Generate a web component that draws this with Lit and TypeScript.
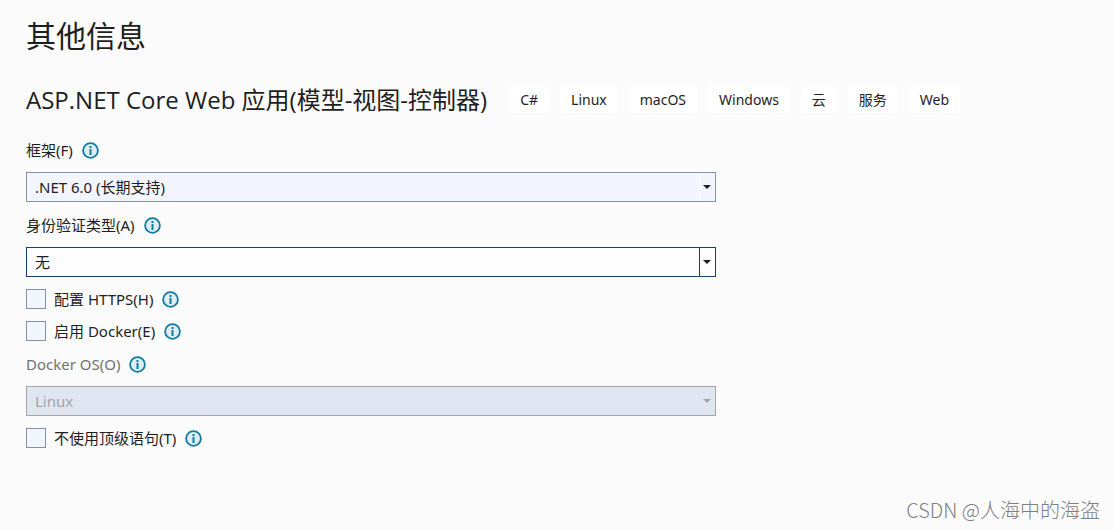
import { LitElement, html, css, svg } from "lit";
import { customElement, property } from "lit/decorators.js";

@customElement("info-tip")
export class InfoTip extends LitElement {
  @property() label = "";

  static styles = css`
    :host {
      display: inline-flex;
    }
    .tip {
      display: flex;
      padding: 0;
      border: 0;
      background: none;
      cursor: pointer;
    }
    .glyph {
      display: block;
      width: 17px;
      height: 17px;
    }
  `;

  render() {
    return html`<button class="tip" type="button" aria-label=${this.label}>
      ${svg`<svg class="glyph" viewBox="0 0 17 17" aria-hidden="true">
        <circle cx="8.5" cy="8.5" r="7.4" fill="#e0edf1" stroke="#0e7ea6" stroke-width="1.8"/>
        <rect x="7.5" y="4" width="2" height="2" fill="#0e7ea6"/>
        <rect x="7.5" y="7" width="2" height="6" fill="#0e7ea6"/>
      </svg>`}
    </button>`;
  }
}

interface SelectField {
  kind: "select";
  id: string;
  label: string;
  value: string;
  state: "normal" | "focused" | "disabled";
}

interface CheckField {
  kind: "check";
  id: string;
  label: string;
}

type Field = SelectField | CheckField;

const TAGS = ["C#", "Linux", "macOS", "Windows", "云", "服务", "Web"];

const FIELDS: Field[] = [
  { kind: "select", id: "framework", label: "框架(F)", value: ".NET 6.0 (长期支持)", state: "normal" },
  { kind: "select", id: "auth", label: "身份验证类型(A)", value: "无", state: "focused" },
  { kind: "check", id: "https", label: "配置 HTTPS(H)" },
  { kind: "check", id: "docker", label: "启用 Docker(E)" },
  { kind: "select", id: "docker-os", label: "Docker OS(O)", value: "Linux", state: "disabled" },
  { kind: "check", id: "top-level", label: "不使用顶级语句(T)" },
];

@customElement("app-root")
export class AppRoot extends LitElement {
  static styles = css`
    :host {
      display: flex;
      flex-direction: column;
      box-sizing: border-box;
      min-height: 100vh;
      padding: 16px 15px 6px 26px;
      background: #fbfbfb;
      color: #1e1e1e;
      font-family: "Noto Sans", "Noto Sans CJK SC", sans-serif;
      font-size: 15px;
      line-height: 21px;
    }
    .title {
      margin: 0 0 28px;
      font-size: 30px;
      line-height: 40px;
      font-weight: 400;
    }
    .head {
      display: flex;
      flex-wrap: wrap;
      align-items: center;
      gap: 8px 22px;
      margin-bottom: 24px;
    }
    .template {
      margin: 0;
      font-family: "Open Sans", "Noto Sans CJK SC", sans-serif;
      font-size: 24px;
      line-height: 31px;
      font-weight: 400;
    }
    .tags {
      display: flex;
      flex-wrap: wrap;
      gap: 11px;
      margin: 0;
      padding: 0;
      list-style: none;
    }
    .tag {
      padding: 3px 11px;
      border-radius: 4px;
      background: #fff;
      font-size: 14px;
    }
    .form {
      display: flex;
      flex-direction: column;
      gap: 12px;
      max-width: 690px;
    }
    .field {
      display: flex;
      flex-direction: column;
      gap: 10px;
    }
    .caption,
    .check {
      display: flex;
      align-items: center;
      gap: 9px;
    }
    .caption {
      line-height: 23px;
    }
    .check {
      height: 20px;
    }
    .check-label {
      display: flex;
      align-items: center;
      gap: 8px;
    }
    .disabled .caption-text {
      color: #717171;
    }
    .combo {
      display: grid;
      grid-template-columns: 1fr 17px;
    }
    .select {
      grid-area: 1 / 1 / 2 / 3;
      appearance: none;
      box-sizing: border-box;
      width: 100%;
      height: 30px;
      margin: 0;
      padding: 0 24px 0 8px;
      border: 1px solid #8591ad;
      border-radius: 0;
      outline: none;
      background: #f2f5fd;
      color: #1e1e1e;
      font: inherit;
      opacity: 1;
    }
    .drop {
      grid-area: 1 / 2 / 2 / 3;
      display: flex;
      align-items: center;
      justify-content: center;
      box-sizing: border-box;
      margin: 1px 1px 1px 0;
      padding-right: 2px;
      border-left: 1px solid #fbfbfb;
      color: #1e1e1e;
      pointer-events: none;
      z-index: 1;
    }
    .arrow {
      display: block;
      width: 8px;
      height: 4px;
    }
    .focused .select {
      border-color: #1f3a75;
      background: #fdfdfd;
    }
    .focused .drop {
      border-left-color: #1f3a75;
    }
    .disabled .select {
      border-color: #a2a4a5;
      background: #dfe6f2;
      color: #a2a4a5;
    }
    .disabled .drop {
      border-left-color: transparent;
      color: #a2a4a5;
    }
    .box {
      appearance: none;
      box-sizing: border-box;
      width: 20px;
      height: 20px;
      margin: 0;
      border: 1px solid #8591ad;
      background: #f2f5fd;
    }
    .box:checked {
      background: #1f3a75;
      box-shadow: inset 0 0 0 4px #f2f5fd;
    }
    .credit {
      margin: auto 0 0;
      text-align: right;
      color: #7f7f7f;
      font-family: "Noto Sans CJK SC", sans-serif;
      font-size: 20px;
      line-height: 28px;
      font-weight: 300;
      text-shadow: 1px 1px 0 #fff;
    }
  `;

  private renderSelect(f: SelectField) {
    return html`<div class="field ${f.state}">
      <div class="caption">
        <label class="caption-text" for=${f.id}>${f.label}</label>
        <info-tip label=${f.label}></info-tip>
      </div>
      <div class="combo">
        <select class="select" id=${f.id} ?disabled=${f.state === "disabled"}>
          <option>${f.value}</option>
        </select>
        <span class="drop">
          <svg class="arrow" viewBox="0 0 8 4" aria-hidden="true">
            <path d="M0 0H8L4 4Z" fill="currentColor" />
          </svg>
        </span>
      </div>
    </div>`;
  }

  private renderCheck(f: CheckField) {
    return html`<div class="check">
      <label class="check-label" for=${f.id}>
        <input class="box" type="checkbox" id=${f.id} />
        <span>${f.label}</span>
      </label>
      <info-tip label=${f.label}></info-tip>
    </div>`;
  }

  render() {
    return html`
      <h1 class="title">其他信息</h1>
      <div class="head">
        <h2 class="template">ASP.NET Core Web 应用(模型-视图-控制器)</h2>
        <ul class="tags">
          ${TAGS.map((t) => html`<li class="tag">${t}</li>`)}
        </ul>
      </div>
      <form class="form">
        ${FIELDS.map((f) => (f.kind === "select" ? this.renderSelect(f) : this.renderCheck(f)))}
      </form>
      <p class="credit">CSDN @人海中的海盗</p>
    `;
  }
}
